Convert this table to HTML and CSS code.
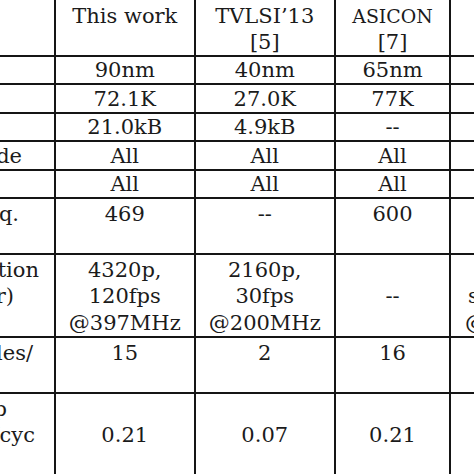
FILE: index.html
```html
<!DOCTYPE html>
<html>
<head>
<meta charset="utf-8">
<link rel="stylesheet" href="styles.css">
</head>
<body>
<table class="cmp">
  <colgroup>
    <col class="c0"><col class="c1"><col class="c2"><col class="c3"><col class="c4">
  </colgroup>
  <tr class="h2 head">
    <td class="lab"></td>
    <td>This work</td>
    <td>TVLSI’13<br>[5]</td>
    <td><span class="small">ASICON</span><br>[7]</td>
    <td></td>
  </tr>
  <tr class="h1">
    <td class="lab"></td>
    <td>90nm</td>
    <td>40nm</td>
    <td>65nm</td>
    <td></td>
  </tr>
  <tr class="h1">
    <td class="lab"></td>
    <td>72.1K</td>
    <td>27.0K</td>
    <td>77K</td>
    <td></td>
  </tr>
  <tr class="h1">
    <td class="lab"></td>
    <td>21.0kB</td>
    <td>4.9kB</td>
    <td>--</td>
    <td></td>
  </tr>
  <tr class="h1">
    <td class="lab"><span class="ln p32">de</span></td>
    <td>All</td>
    <td>All</td>
    <td>All</td>
    <td></td>
  </tr>
  <tr class="h1">
    <td class="lab"></td>
    <td>All</td>
    <td>All</td>
    <td>All</td>
    <td></td>
  </tr>
  <tr class="h2">
    <td class="lab"><span class="ln p35">q.</span></td>
    <td>469</td>
    <td>--</td>
    <td>600</td>
    <td></td>
  </tr>
  <tr class="h3">
    <td class="lab"><span class="ln p15">ction</span><span class="ln p40">r)</span></td>
    <td>4320p,<br>120fps<br>@397MHz</td>
    <td>2160p,<br>30fps<br>@200MHz</td>
    <td class="mid">--</td>
    <td class="last"><span class="ln">&nbsp;</span><span class="ln q17">s</span><span class="ln q14">@</span></td>
  </tr>
  <tr class="h2">
    <td class="lab"><span class="ln p21">les/</span></td>
    <td>15</td>
    <td>2</td>
    <td>16</td>
    <td></td>
  </tr>
  <tr class="h3">
    <td class="lab"><span class="ln p47">p</span><span class="ln p19">/cyc</span></td>
    <td class="mid">0.21</td>
    <td class="mid">0.07</td>
    <td class="mid">0.21</td>
    <td></td>
  </tr>
</table>
</body>
</html>
```

FILE: styles.css
```css
html, body {
  margin: 0;
  padding: 0;
  background: #ffffff;
  overflow: hidden;
}

.cmp {
  border-collapse: collapse;
  table-layout: fixed;
  width: 623px;
  margin-left: -61px;
  margin-top: -2px;
  font-family: "DejaVu Serif", "Liberation Serif", serif;
  font-size: 21px;
  color: #1b1b1b;
}

.c0 { width: 115px; }
.c1 { width: 139.5px; }
.c2 { width: 140.5px; }
.c3 { width: 115px; }
.c4 { width: 113px; }

.cmp td {
  border: 2px solid #151515;
  padding: 1.5px 0 0;
  text-align: center;
  vertical-align: top;
  white-space: nowrap;
  overflow: hidden;
}

.h1 td { line-height: 25px; height: 25px; }
.h2 td { line-height: 26.25px; height: 52.5px; }
.h3 td { line-height: 26.5px; height: 79.5px; }

.head td { padding-top: 2.5px; line-height: 26px; height: 52px; }

.cmp td.mid { vertical-align: middle; }

.small { font-size: 0.9em; }

.cmp td.lab { text-align: right; }
.cmp td.last { text-align: left; }

.ln { display: block; }

.p15 { padding-right: 15px; }
.p19 { padding-right: 19px; }
.p21 { padding-right: 21px; }
.p32 { padding-right: 32px; }
.p35 { padding-right: 35px; }
.p40 { padding-right: 40px; }
.p47 { padding-right: 47px; }
.q14 { padding-left: 14px; }
.q17 { padding-left: 17px; }
```
